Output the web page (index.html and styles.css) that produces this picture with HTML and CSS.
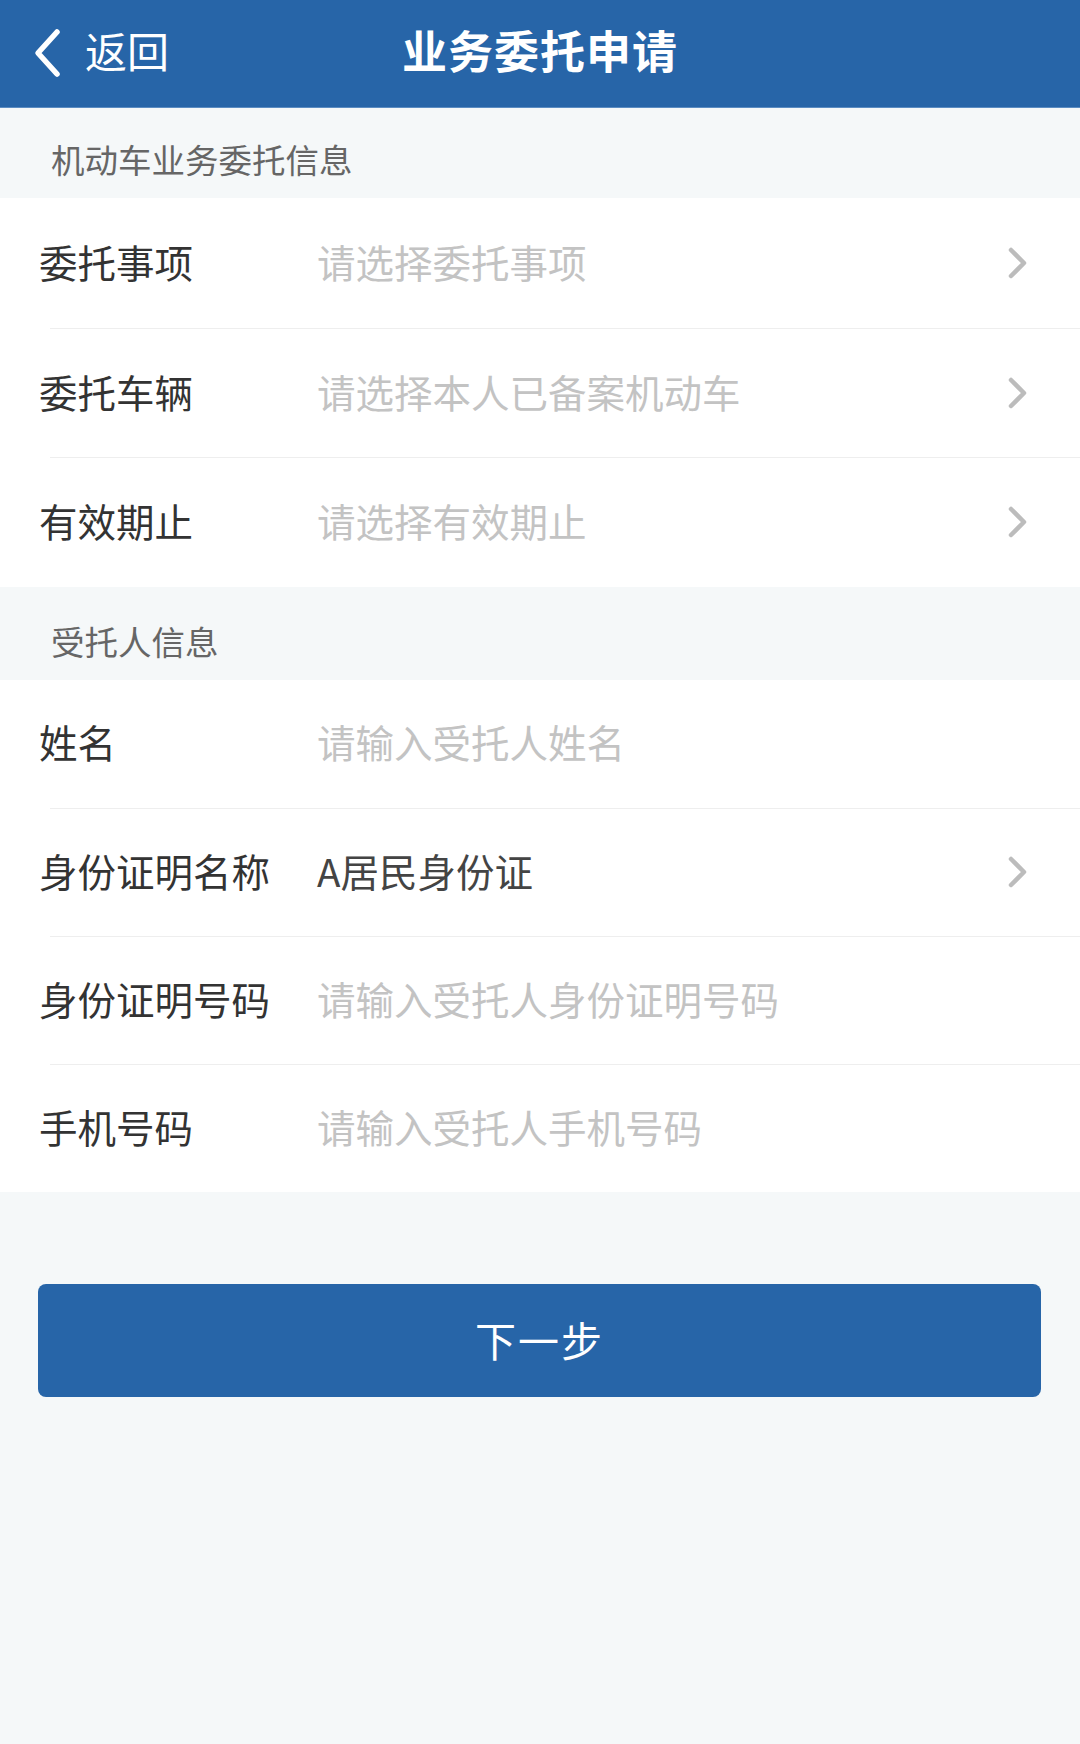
FILE: index.html
```html
<!DOCTYPE html>
<html lang="zh-CN">
<head>
<meta charset="utf-8">
<title>业务委托申请</title>
<link rel="stylesheet" href="styles.css">
</head>
<body>
<div class="page">
  <header class="navbar">
    <div class="back">
      <svg class="back-icon" width="32" height="50" viewBox="0 0 32 50"><path d="M26 4 L7 25 L26 46" fill="none" stroke="#fff" stroke-width="5.5" stroke-linecap="round" stroke-linejoin="round"/></svg>
      <span class="back-text">返回</span>
    </div>
    <h1 class="title">业务委托申请</h1>
  </header>

  <div class="section-head">机动车业务委托信息</div>
  <div class="group">
    <div class="row tall">
      <span class="label">委托事项</span>
      <span class="value placeholder">请选择委托事项</span>
      <svg class="chev" width="24" height="34" viewBox="0 0 24 34"><path d="M5 4 L18 17 L5 30" fill="none" stroke="#bcbcbc" stroke-width="4.5" stroke-linecap="round" stroke-linejoin="round"/></svg>
    </div>
    <div class="row tall">
      <span class="label">委托车辆</span>
      <span class="value placeholder">请选择本人已备案机动车</span>
      <svg class="chev" width="24" height="34" viewBox="0 0 24 34"><path d="M5 4 L18 17 L5 30" fill="none" stroke="#bcbcbc" stroke-width="4.5" stroke-linecap="round" stroke-linejoin="round"/></svg>
    </div>
    <div class="row tall">
      <span class="label">有效期止</span>
      <span class="value placeholder">请选择有效期止</span>
      <svg class="chev" width="24" height="34" viewBox="0 0 24 34"><path d="M5 4 L18 17 L5 30" fill="none" stroke="#bcbcbc" stroke-width="4.5" stroke-linecap="round" stroke-linejoin="round"/></svg>
    </div>
  </div>

  <div class="section-head second">受托人信息</div>
  <div class="group">
    <div class="row">
      <span class="label">姓名</span>
      <span class="value placeholder">请输入受托人姓名</span>
    </div>
    <div class="row">
      <span class="label">身份证明名称</span>
      <span class="value filled">A居民身份证</span>
      <svg class="chev" width="24" height="34" viewBox="0 0 24 34"><path d="M5 4 L18 17 L5 30" fill="none" stroke="#bcbcbc" stroke-width="4.5" stroke-linecap="round" stroke-linejoin="round"/></svg>
    </div>
    <div class="row">
      <span class="label">身份证明号码</span>
      <span class="value placeholder">请输入受托人身份证明号码</span>
    </div>
    <div class="row">
      <span class="label">手机号码</span>
      <span class="value placeholder">请输入受托人手机号码</span>
    </div>
  </div>

  <div class="actions">
    <button class="next-btn">下一步</button>
  </div>
</div>
</body>
</html>
```

FILE: styles.css
```css
html, body {
  margin: 0;
  padding: 0;
}
body {
  background: #f5f8f9;
  font-family: "Noto Sans CJK SC", "Noto Sans", sans-serif;
  width: 1080px;
  min-height: 1744px;
}
.page {
  display: flex;
  flex-direction: column;
}
.navbar {
  height: 108px;
  background: #2765a8;
  display: flex;
  align-items: center;
  justify-content: center;
  position: relative;
  box-sizing: border-box;
  border-bottom: 1px solid #5b8cc2;
  padding-bottom: 8px;
}
.back {
  position: absolute;
  left: 31px;
  top: 0;
  bottom: 8px;
  display: flex;
  align-items: center;
  gap: 22px;
}
.back-icon {
  display: block;
  margin-top: 6px;
}
.back-text {
  color: #fff;
  font-size: 42px;
  line-height: 1;
}
.title {
  margin: 0;
  color: #fff;
  font-size: 45px;
  font-weight: 700;
  line-height: 1;
  letter-spacing: 1px;
}
.section-head {
  height: 90px;
  box-sizing: border-box;
  padding: 34px 0 0 51px;
  font-size: 33.5px;
  line-height: 34px;
  color: #666;
}
.section-head.second {
  height: 93px;
  padding-top: 37px;
}
.group {
  background: #fff;
  display: flex;
  flex-direction: column;
}
.row {
  height: 128px;
  display: flex;
  align-items: center;
  padding: 0 52px 4px 39px;
  box-sizing: border-box;
  position: relative;
}
.row.tall {
  height: 129.5px;
}
.row + .row {
  border-top: 1px solid #eeeeee;
}
.row + .row::before {
  content: "";
  position: absolute;
  left: 0;
  width: 50px;
  top: -1px;
  height: 1px;
  background: #fff;
}
.label {
  width: 278px;
  flex: none;
  font-size: 38.5px;
  color: #333;
  line-height: 1;
}
.value {
  flex: 1;
  font-size: 38.5px;
  line-height: 1;
}
.placeholder {
  color: #c3c3c3;
}
.filled {
  color: #444;
}
.chev {
  flex: none;
  display: block;
  margin-right: -2px;
  margin-top: 4px;
}
.actions {
  padding: 92px 39px 0 38px;
}
.next-btn {
  width: 100%;
  height: 113px;
  border: none;
  border-radius: 8px;
  background: #2765a8;
  color: #fff;
  font-family: "Noto Sans CJK SC", "Noto Sans", sans-serif;
  font-size: 41px;
  line-height: 1;
  letter-spacing: 2px;
  display: block;
  padding: 0 0 2px 0;
}
```
